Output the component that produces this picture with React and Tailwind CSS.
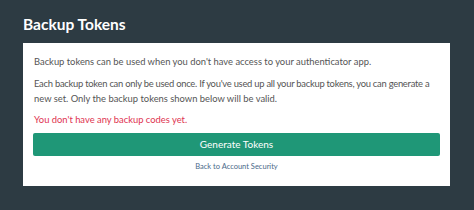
export default function App() {
  return (
    <div className="w-[474px] h-[210px] bg-[#2d3b43] pt-[14px] pl-[23px] overflow-hidden" style={{ fontFamily: "Lato, 'Noto Sans', sans-serif" }}>
      <h1 className="text-[15.5px] font-bold text-white leading-[20px] h-[29px]">Backup Tokens</h1>
      <div className="w-[427px] h-[143px] bg-white pt-[11px] px-[10px] text-[9.4px] text-[#555] leading-[15px]">
        <p className="pl-px">Backup tokens can be used when you don't have access to your authenticator app.</p>
        <p className="pl-px mt-[7px] whitespace-nowrap">
          <span className="block tracking-[-0.25px]">Each backup token can only be used once. If you've used up all your backup tokens, you can generate a</span>
          <span className="block">new set. Only the backup tokens shown below will be valid.</span>
        </p>
        <p className="pl-px mt-[6px] text-[#e03350]">You don't have any backup codes yet.</p>
        <button className="mt-[6px] w-full h-[23px] rounded-[2px] bg-[#1f9777] text-white text-[10px]">Generate Tokens</button>
        <div className="text-center mt-[3px] text-[7.5px] text-[#4b6a8a]">Back to Account Security</div>
      </div>
    </div>
  );
}
